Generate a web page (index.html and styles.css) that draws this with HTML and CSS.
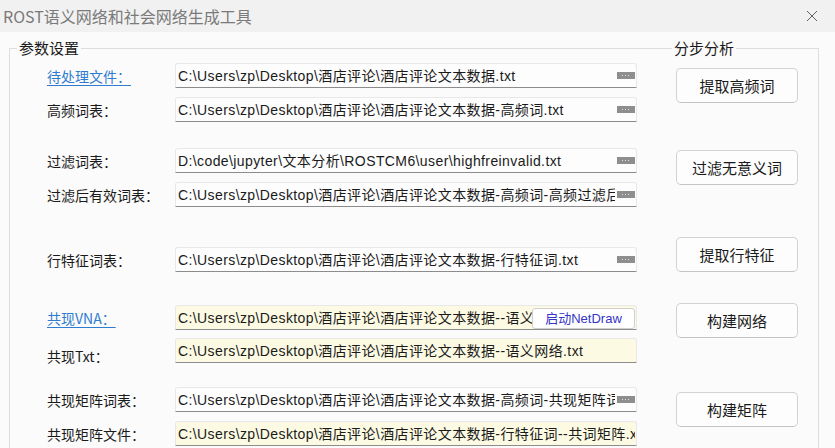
FILE: index.html
```html
<!DOCTYPE html>
<html lang="zh-CN">
<head>
<meta charset="utf-8">
<title>ROST语义网络和社会网络生成工具</title>
<link rel="stylesheet" href="styles.css">
</head>
<body>
<div class="window">
  <div class="titlebar">
    <span class="title">ROST语义网络和社会网络生成工具</span>
    <svg class="close" width="12" height="12" viewBox="0 0 12 12"><path d="M1 1 L11 11 M11 1 L1 11" stroke="#606060" stroke-width="1" fill="none"/></svg>
  </div>
  <div class="main">
    <fieldset class="params">
      <legend>参数设置</legend>
      <div class="row g1">
        <span class="label link">待处理文件：</span>
        <div class="field"><span class="val">C:\Users\zp\Desktop\酒店评论\酒店评论文本数据.txt</span><span class="dots"></span></div>
      </div>
      <div class="row g2">
        <span class="label">高频词表：</span>
        <div class="field"><span class="val">C:\Users\zp\Desktop\酒店评论\酒店评论文本数据-高频词.txt</span><span class="dots"></span></div>
      </div>
      <div class="row g3">
        <span class="label">过滤词表：</span>
        <div class="field"><span class="val">D:\code\jupyter\文本分析\ROSTCM6\user\highfreinvalid.txt</span><span class="dots"></span></div>
      </div>
      <div class="row g4">
        <span class="label">过滤后有效词表：</span>
        <div class="field"><span class="val">C:\Users\zp\Desktop\酒店评论\酒店评论文本数据-高频词-高频过滤后.txt</span><span class="dots"></span></div>
      </div>
      <div class="row g5">
        <span class="label">行特征词表：</span>
        <div class="field"><span class="val">C:\Users\zp\Desktop\酒店评论\酒店评论文本数据-行特征词.txt</span><span class="dots"></span></div>
      </div>
      <div class="row g6">
        <span class="label link">共现VNA：</span>
        <div class="field yellow"><span class="val">C:\Users\zp\Desktop\酒店评论\酒店评论文本数据--语义网络.vna</span><span class="netdraw">启动NetDraw</span></div>
      </div>
      <div class="row g7">
        <span class="label low">共现Txt：</span>
        <div class="field yellow"><span class="val">C:\Users\zp\Desktop\酒店评论\酒店评论文本数据--语义网络.txt</span></div>
      </div>
      <div class="row g8">
        <span class="label">共现矩阵词表：</span>
        <div class="field"><span class="val">C:\Users\zp\Desktop\酒店评论\酒店评论文本数据-高频词-共现矩阵词表.txt</span><span class="dots"></span></div>
      </div>
      <div class="row g9">
        <span class="label">共现矩阵文件：</span>
        <div class="field yellow"><span class="val">C:\Users\zp\Desktop\酒店评论\酒店评论文本数据-行特征词--共词矩阵.xls</span></div>
      </div>
    </fieldset>
    <fieldset class="steps">
      <legend>分步分析</legend>
      <button class="step b1">提取高频词</button>
      <button class="step b2">过滤无意义词</button>
      <button class="step b3">提取行特征</button>
      <button class="step b4">构建网络</button>
      <button class="step b5">构建矩阵</button>
    </fieldset>
  </div>
</div>
</body>
</html>
```

FILE: styles.css
```css
html, body {
  margin: 0;
  padding: 0;
}
body {
  background: #fbfbfb;
  font-family: "Noto Sans CJK SC", "Noto Sans", sans-serif;
  color: #1a1a1a;
}
.window {
  width: 835px;
  height: 448px;
  overflow: hidden;
}
.titlebar {
  height: 32px;
  background: #f1f1f1;
  display: flex;
  align-items: center;
  justify-content: space-between;
  padding: 0 17px 0 3px;
}
.title {
  font-size: 16px;
  line-height: 20px;
  color: #7a7a7a;
}
.close {
  display: block;
}
.main {
  display: flex;
  padding-left: 9px;
  padding-top: 6px;
}
fieldset {
  margin: 0;
  padding: 0;
  min-width: 0;
  height: 430px;
  box-sizing: border-box;
  border: 1px solid #dedede;
  border-bottom: none;
}
legend {
  font-size: 15px;
  line-height: 20px;
  padding: 0 2px;
  color: #1a1a1a;
}
.params {
  width: 651px;
  border-right: none;
}
.params legend {
  margin-left: 7px;
}
.steps {
  width: 159px;
  border-left: none;
  padding-left: 16px;
}
.steps legend {
  margin-left: -4px;
}
.row {
  display: flex;
  align-items: center;
  height: 25px;
  padding-left: 37px;
}
.g1 { margin-top: 5px; }
.g2 { margin-top: 9px; }
.g3 { margin-top: 26px; }
.g4 { margin-top: 9px; }
.g5 { margin-top: 40px; }
.g6 { margin-top: 33px; }
.g7 { margin-top: 8px; }
.g8 { margin-top: 24px; }
.g9 { margin-top: 9px; }
.label {
  width: 128px;
  flex: none;
  font-size: 14px;
  line-height: 20px;
  color: #1a1a1a;
}
.label.low {
  position: relative;
  top: 5px;
}
.link {
  color: #2f7bd0;
  text-decoration: underline;
  text-underline-offset: 3px;
}
.field {
  width: 462px;
  height: 25px;
  flex: none;
  box-sizing: border-box;
  border: 1px solid #e8e8e8;
  border-bottom: 1px solid #8c8c8c;
  border-radius: 3px 3px 0 0;
  background: #fdfdfd;
  display: flex;
  align-items: center;
  padding: 0 1px 0 2px;
}
.field.yellow {
  background: #fcfae3;
}
.val {
  flex: 1;
  min-width: 0;
  overflow: hidden;
  white-space: nowrap;
  font-family: "Liberation Sans", "Noto Sans CJK SC", sans-serif;
  font-size: 14px;
  letter-spacing: 0.4px;
  line-height: 20px;
  color: #1a1a1a;
}
.dots {
  flex: none;
  width: 18px;
  height: 7px;
  margin-left: 2px;
  background: #8e8e8e;
  position: relative;
}
.dots::after {
  content: "";
  position: absolute;
  left: 5px;
  top: 3px;
  width: 8px;
  height: 1px;
  background: repeating-linear-gradient(90deg, #e0e0e0 0 1px, transparent 1px 3px);
}
.netdraw {
  flex: none;
  width: 103px;
  height: 21px;
  box-sizing: border-box;
  border: 1px solid #cfcfcf;
  border-radius: 3px;
  background: #ffffff;
  color: #3535c8;
  font-family: "Liberation Sans", "Noto Sans CJK SC", sans-serif;
  font-size: 13px;
  line-height: 19px;
  text-align: center;
  margin-top: 1px;
}
.step {
  display: block;
  width: 122px;
  height: 35px;
  box-sizing: border-box;
  border: 1px solid #d2d2d2;
  border-bottom-color: #c4c4c4;
  border-radius: 5px;
  background: #fdfdfd;
  font-family: "Noto Sans CJK SC", sans-serif;
  font-size: 15px;
  color: #1a1a1a;
  padding: 0;
}
.b1 { margin-top: 10px; }
.b2 { margin-top: 47px; }
.b3 { margin-top: 52px; }
.b4 { margin-top: 31px; }
.b5 { margin-top: 54px; }
```
